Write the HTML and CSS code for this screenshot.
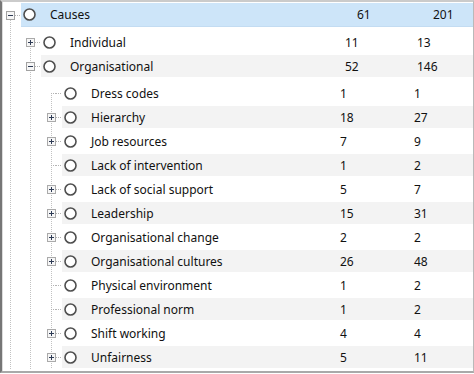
FILE: index.html
```html
<!DOCTYPE html>
<html lang="en">
<head>
	<meta charset="UTF-8"/>
	<title>Codes</title>
	<link rel="stylesheet" href="styles.css">
</head>
<body>
	<svg class="defs" width="0" height="0">
		<symbol id="minus" viewBox="0 0 9 9">
			<rect x="0.5" y="0.5" width="8" height="8" fill="#f6f6f6" stroke="#a2a2a2"/>
			<path d="M2 4.5h5" stroke="#2e3b55"/>
		</symbol>
		<symbol id="plus" viewBox="0 0 9 9">
			<rect x="0.5" y="0.5" width="8" height="8" fill="#f6f6f6" stroke="#aaaaaa"/>
			<path d="M2 4.5h5M4.5 2v5" stroke="#2e3b55"/>
		</symbol>
		<symbol id="node" viewBox="0 0 13 13">
			<circle cx="6.5" cy="6.5" r="5.5" fill="#fff" stroke="#4f4f4f" stroke-width="1.6"/>
		</symbol>
	</svg>

	<div class="tree">
		<ul class="list l0">
			<li>
				<div class="row">
					<svg class="exp"><use href="#minus"/></svg><span class="stub"></span>
					<div class="band sel"><svg class="ico"><use href="#node"/></svg><span class="name">Causes</span><span class="n1">61</span><span class="n2">201</span></div>
				</div>
				<ul class="list l1">
					<li>
						<div class="row">
							<svg class="exp"><use href="#plus"/></svg><span class="stub"></span>
							<div class="band"><svg class="ico"><use href="#node"/></svg><span class="name">Individual</span><span class="n1">11</span><span class="n2">13</span></div>
						</div>
					</li>
					<li>
						<div class="row">
							<svg class="exp"><use href="#minus"/></svg><span class="stub"></span>
							<div class="band alt"><svg class="ico"><use href="#node"/></svg><span class="name">Organisational</span><span class="n1">52</span><span class="n2">146</span></div>
						</div>
						<ul class="list l2">
							<li><div class="row"><span class="leaf"></span><span class="stub"></span><div class="band"><svg class="ico"><use href="#node"/></svg><span class="name">Dress codes</span><span class="n1">1</span><span class="n2">1</span></div></div></li>
							<li><div class="row"><svg class="exp"><use href="#plus"/></svg><span class="stub"></span><div class="band alt"><svg class="ico"><use href="#node"/></svg><span class="name">Hierarchy</span><span class="n1">18</span><span class="n2">27</span></div></div></li>
							<li><div class="row"><svg class="exp"><use href="#plus"/></svg><span class="stub"></span><div class="band"><svg class="ico"><use href="#node"/></svg><span class="name">Job resources</span><span class="n1">7</span><span class="n2">9</span></div></div></li>
							<li><div class="row"><span class="leaf"></span><span class="stub"></span><div class="band alt"><svg class="ico"><use href="#node"/></svg><span class="name">Lack of intervention</span><span class="n1">1</span><span class="n2">2</span></div></div></li>
							<li><div class="row"><svg class="exp"><use href="#plus"/></svg><span class="stub"></span><div class="band"><svg class="ico"><use href="#node"/></svg><span class="name">Lack of social support</span><span class="n1">5</span><span class="n2">7</span></div></div></li>
							<li><div class="row"><svg class="exp"><use href="#plus"/></svg><span class="stub"></span><div class="band alt"><svg class="ico"><use href="#node"/></svg><span class="name">Leadership</span><span class="n1">15</span><span class="n2">31</span></div></div></li>
							<li><div class="row"><svg class="exp"><use href="#plus"/></svg><span class="stub"></span><div class="band"><svg class="ico"><use href="#node"/></svg><span class="name">Organisational change</span><span class="n1">2</span><span class="n2">2</span></div></div></li>
							<li><div class="row"><svg class="exp"><use href="#plus"/></svg><span class="stub"></span><div class="band alt"><svg class="ico"><use href="#node"/></svg><span class="name">Organisational cultures</span><span class="n1">26</span><span class="n2">48</span></div></div></li>
							<li><div class="row"><span class="leaf"></span><span class="stub"></span><div class="band"><svg class="ico"><use href="#node"/></svg><span class="name">Physical environment</span><span class="n1">1</span><span class="n2">2</span></div></div></li>
							<li><div class="row"><span class="leaf"></span><span class="stub"></span><div class="band alt"><svg class="ico"><use href="#node"/></svg><span class="name">Professional norm</span><span class="n1">1</span><span class="n2">2</span></div></div></li>
							<li><div class="row"><svg class="exp"><use href="#plus"/></svg><span class="stub"></span><div class="band"><svg class="ico"><use href="#node"/></svg><span class="name">Shift working</span><span class="n1">4</span><span class="n2">4</span></div></div></li>
							<li><div class="row"><svg class="exp"><use href="#plus"/></svg><span class="stub"></span><div class="band alt"><svg class="ico"><use href="#node"/></svg><span class="name">Unfairness</span><span class="n1">5</span><span class="n2">11</span></div></div></li>
						</ul>
					</li>
				</ul>
			</li>
		</ul>
	</div>
</body>
</html>
```

FILE: styles.css
```css
* {
	margin: 0;
	padding: 0;
	box-sizing: border-box;
}

body {
	background-color: #fff;
	color: #111;
	font-family: "Noto Sans", sans-serif;
	font-size: 12px;
}

.defs {
	position: absolute;
}

.tree {
	width: 474px;
	height: 373px;
	overflow: hidden;
	padding-top: 1px;
	border-top: 2px solid #cbcbcb;
	border-left: 2px solid #767676;
	border-right: 1px solid #b9b9b9;
	border-bottom: 2px solid #a9a9a9;
	box-shadow: inset 1px 0 #dcdcdc;
}

/* dotted tree lines */
.list {
	list-style: none;
	background-image: repeating-linear-gradient(to bottom, #c2c2c2 0 1px, transparent 1px 2px);
	background-repeat: no-repeat;
	background-size: 1px 100%;
}
.l0 {
	background-position: 8px 17px;
}
.l1 {
	padding-top: 3px;
	background-position: 28px 15px;
}
.l2 {
	padding-top: 3px;
	background-position: 49px 15px;
}

.row {
	display: flex;
	align-items: center;
	height: 24px;
}
.l0 > li > .row { padding-left: 4px; }
.l1 > li > .row { padding-left: 24px; }
.l2 > li > .row { padding-left: 45px; }

.exp {
	flex: none;
	width: 9px;
	height: 9px;
}
.leaf {
	flex: none;
	width: 9px;
	height: 1px;
	background: repeating-linear-gradient(to right, #b4b4b4 0 1px, transparent 1px 2px) 4px 0 / 5px 1px no-repeat;
}
.stub {
	flex: none;
	width: 6px;
	height: 1px;
	background: repeating-linear-gradient(to right, #b4b4b4 0 1px, transparent 1px 2px);
}

.band {
	display: flex;
	align-items: center;
	flex: 1;
	height: 22px;
	padding-left: 2px;
}
.band.alt {
	background-color: #f3f3f3;
}
.band.sel {
	height: 24px;
	background-color: #cde5f9;
	border-bottom: 1px solid #c3dcf2;
}

.ico {
	flex: none;
	width: 13px;
	height: 13px;
}

.name {
	margin-left: 14px;
	white-space: nowrap;
}
.l0 > li > .row .name { width: 307px; }
.l1 > li > .row .name { width: 275px; }
.l2 > li > .row .name { width: 249px; }

.l0 > li > .row .n1 { width: 76px; }
.l1 > li > .row .n1 { width: 72px; }
.l2 > li > .row .n1 { width: 74px; }
```
